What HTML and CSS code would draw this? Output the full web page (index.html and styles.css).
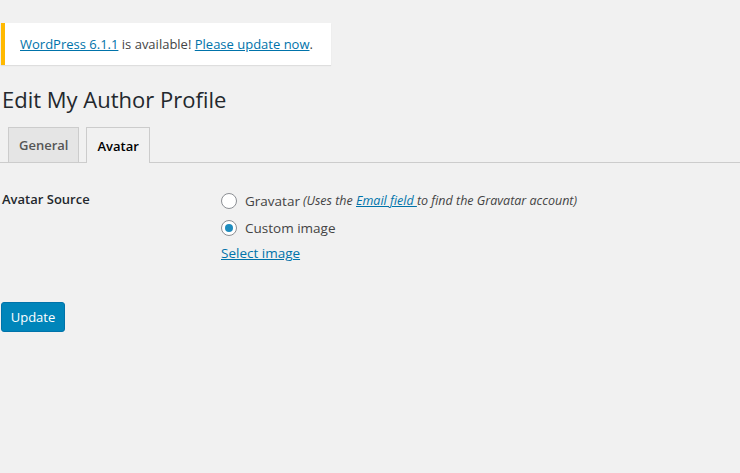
FILE: index.html
```html
<!DOCTYPE html>
<html>
<head>
<meta charset="utf-8">
<link rel="stylesheet" href="styles.css">
</head>
<body>
<div class="wrap">
  <div class="notice">
    <p><a href="#">WordPress 6.1.1</a> is available! <a href="#">Please update now</a>.</p>
  </div>
  <h1 class="title">Edit My Author Profile</h1>
  <nav class="tabs">
    <a class="tab" href="#">General</a>
    <a class="tab active" href="#">Avatar</a>
  </nav>
  <div class="form-row">
    <div class="label">Avatar Source</div>
    <div class="field">
      <label class="radio-row"><span class="radio"></span>Gravatar <em class="hint">(Uses the <a href="#">Email field </a>to find the Gravatar account)</em></label>
      <label class="radio-row"><span class="radio checked"></span>Custom image</label>
      <a class="select-link" href="#">Select image</a>
    </div>
  </div>
  <button class="btn">Update</button>
</div>
</body>
</html>
```
FILE: styles.css
```css
html, body { margin: 0; padding: 0; }
body {
  background: #f1f1f1;
  color: #444;
  font-family: "Open Sans", "Noto Sans", sans-serif;
  font-size: 13px;
}
a { color: #0073aa; }
.wrap { padding: 23px 0 0 1px; }
.notice {
  width: 311px;
  height: 42px;
  background: #fff;
  border-left: 4px solid #ffb900;
  box-shadow: 0 1px 1px rgba(0,0,0,0.08);
  padding: 0 0 0 15px;
  display: flex;
  align-items: center;
  box-sizing: content-box;
}
.notice p { margin: 0; font-size: 13px; }
.title {
  margin: 20px 0 0 1px;
  font-size: 22px;
  font-weight: 400;
  color: #23282d;
  line-height: 29px;
}
.tabs {
  display: flex;
  gap: 7px;
  margin-top: 13px;
  margin-left: -1px;
  padding-left: 8px;
  border-bottom: 1px solid #ccc;
  height: 35px;
}
.tab {
  display: flex;
  align-items: center;
  padding: 0 10px;
  border: 1px solid #ccc;
  border-bottom: none;
  background: #e5e5e5;
  color: #555;
  font-weight: 600;
  font-size: 13px;
  text-decoration: none;
  height: 34px;
}
.tab.active {
  background: #f1f1f1;
  color: #000;
  height: 35px;
  margin-bottom: -1px;
}
.form-row {
  display: flex;
  margin-top: 27px;
  margin-left: 1px;
}
.label {
  width: 219px;
  font-weight: 600;
  font-size: 13px;
  color: #23282d;
}
.field { display: flex; flex-direction: column; }
.radio-row {
  display: flex;
  align-items: center;
  height: 27px;
  font-size: 13.5px;
  color: #444;
  margin-top: -3px;
  margin-bottom: 6px;
}
.radio-row + .radio-row { margin-top: -6px; }
.radio {
  width: 14px;
  height: 14px;
  border: 1px solid #8c8f94;
  border-radius: 50%;
  background: #fff;
  margin-right: 8px;
  position: relative;
  flex: none;
}
.radio.checked::after {
  content: "";
  position: absolute;
  left: 3px; top: 3px;
  width: 8px; height: 8px;
  border-radius: 50%;
  background: #1e8cbe;
}
.hint { font-size: 12.5px; margin-left: 3px; }
.select-link { font-size: 13.5px; margin-top: -3px; }
.btn {
  margin-top: 40px;
  background: #0085ba;
  border: 1px solid #0073aa;
  border-radius: 3px;
  color: #fff;
  font-family: inherit;
  font-size: 13px;
  height: 30px;
  width: 64px;
  padding: 0;
  cursor: pointer;
}
```
